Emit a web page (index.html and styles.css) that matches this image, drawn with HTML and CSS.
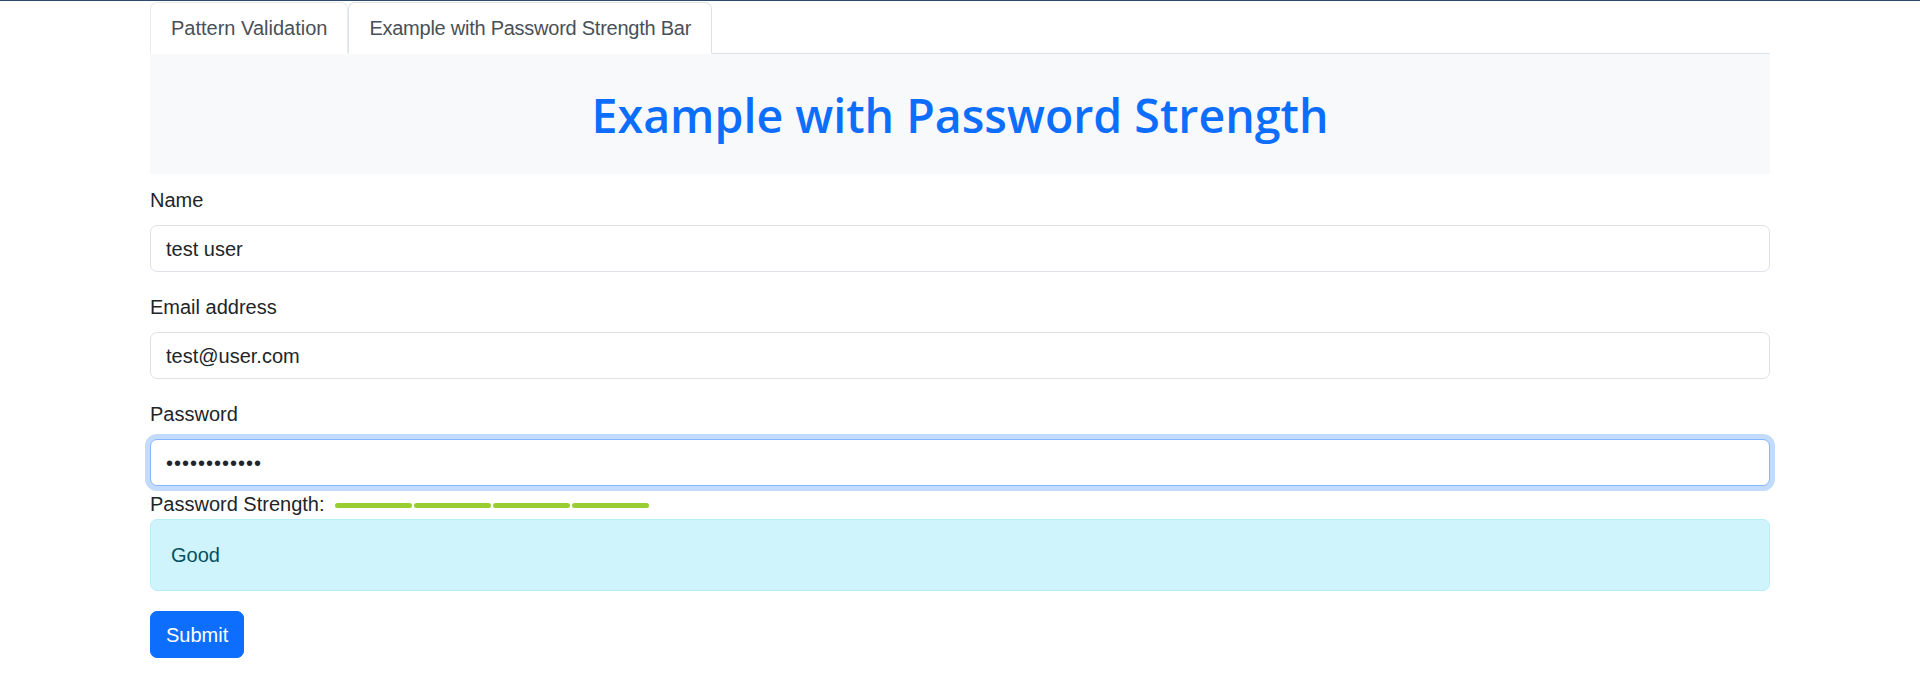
FILE: index.html
```html
<!DOCTYPE html>
<html lang="en">
<head>
  <meta charset="UTF-8" />
  <meta name="viewport" content="width=device-width, initial-scale=1.0"/>
  <title>Password Strength</title>
  <link rel="stylesheet" href="styles.css">
</head>
<body>

  <div class="topline"></div>

  <div class="container">
    <ul class="tabs">
      <li><a class="tab" href="#">Pattern Validation</a></li>
      <li><a class="tab active" href="#">Example with Password Strength Bar</a></li>
    </ul>

    <div class="banner">
      <h1>Example with Password Strength</h1>
    </div>

    <form class="form" onsubmit="return false;">
      <div class="field">
        <label for="name">Name</label>
        <input type="text" id="name" value="test user">
      </div>

      <div class="field">
        <label for="email">Email address</label>
        <input type="email" id="email" value="test@user.com">
      </div>

      <div class="field-tight">
        <label for="password">Password</label>
        <input type="password" id="password" class="focused" value="abcdefgh1234">
      </div>

      <div class="strength">
        <span>Password Strength:</span>
        <div class="bars">
          <div class="bar"></div>
          <div class="bar"></div>
          <div class="bar"></div>
          <div class="bar"></div>
        </div>
      </div>

      <div class="alert">Good</div>

      <button type="submit">Submit</button>
    </form>
  </div>

</body>
</html>
```

FILE: styles.css
```css
* {
  box-sizing: border-box;
}

body {
  font-family: 'Liberation Sans', Arial, sans-serif;
  font-size: 20px;
  line-height: 30px;
  margin: 0;
  background-color: #fff;
  color: #212529;
}

.topline {
  height: 1px;
  background-color: #2c4a6c;
}

.container {
  width: 1620px;
  margin: 1px auto 0;
}

/* tabs */
.tabs {
  display: flex;
  list-style: none;
  margin: 0;
  padding: 0;
  border-bottom: 1px solid #dee2e6;
}

.tab {
  display: block;
  margin-bottom: -1px;
  padding: 10px 20px;
  border: 1px solid #e9ecef;
  border-bottom-color: transparent;
  border-radius: 7px 7px 0 0;
  background-color: #fff;
  color: #495057;
  text-decoration: none;
}

.tab.active {
  border-color: #dee2e6 #dee2e6 #fff;
  letter-spacing: -0.25px;
}

.banner {
  background-color: #f8f9fa;
  padding: 31px 0 29px;
  text-align: center;
}

.banner h1 {
  margin: 0;
  font-family: 'Open Sans', sans-serif;
  font-size: 46.5px;
  font-weight: 600;
  line-height: 60px;
  color: #0d6efd;
}

/* form */
.form {
  margin-top: 11px;
}

.field {
  margin-bottom: 20px;
}

label {
  display: block;
  margin-bottom: 10px;
}

input {
  display: block;
  width: 100%;
  padding: 7.5px 15px;
  border: 1px solid #dee2e6;
  border-radius: 7px;
  font-family: inherit;
  font-size: 20px;
  line-height: 30px;
  color: #212529;
  background-color: #fff;
  outline: none;
}

input.focused {
  border-color: #86b7fe;
  box-shadow: 0 0 0 5px rgba(13, 110, 253, 0.25);
  letter-spacing: 1px;
}

.strength {
  display: flex;
  align-items: center;
  margin-top: 3px;
}

.bars {
  display: flex;
  gap: 2px;
  width: 314px;
  margin-left: 10px;
  margin-top: 3px;
}

.bar {
  flex: 1;
  height: 5px;
  border-radius: 3px;
  background-color: #9acd32;
}

.alert {
  padding: 20px;
  margin-bottom: 20px;
  border: 1px solid #b6effb;
  border-radius: 7px;
  background-color: #cff4fc;
  color: #055160;
}

button {
  padding: 7.5px 15px;
  border: 1px solid #0d6efd;
  border-radius: 7px;
  background-color: #0d6efd;
  color: #fff;
  font-family: inherit;
  font-size: 20px;
  line-height: 30px;
  cursor: pointer;
}

button:hover {
  background-color: #0b5ed7;
}
```
